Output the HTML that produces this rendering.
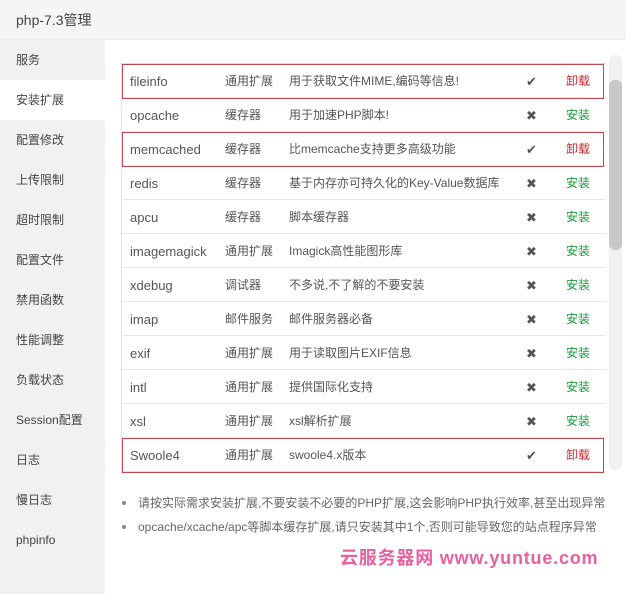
<!DOCTYPE html><html><head><meta charset="utf-8"><style>
*{margin:0;padding:0;box-sizing:border-box}
body{width:626px;height:594px;overflow:hidden;background:#fff;font-family:"Liberation Sans","Noto Sans CJK SC",sans-serif;font-size:12px;color:#555;position:relative}
.hd{position:absolute;left:0;top:0;width:626px;height:40px;background:#f5f5f5;border-bottom:1px solid #eee;font-size:14px;color:#444;line-height:40px;padding-left:16px}
.sb{position:absolute;left:0;top:40px;width:105px;height:554px;background:#f1f1f1}
.sb div{height:40px;line-height:40px;padding-left:16px;font-size:12px;color:#444}
.sb .on{background:#fff}
.tb{position:absolute;left:121px;top:63px;width:485px;border-top:1px solid #ddd;border-left:1px solid #e6e6e6}
.r{position:relative;height:34px;border-bottom:1px solid #e6e6e6;line-height:35px}
.r span{position:absolute;top:0}
.r .a{left:8px;font-size:13px}.r .b{left:103px}.r .c{left:167px}.r .d{left:404px;font-size:13px;color:#555}.r .e{left:444px}
.hl:after{content:"";position:absolute;left:0;top:0;width:480px;height:33px;border:1px solid #c0474d}
.red{color:#d0242b}.grn{color:#1a9a3a}
.sc{position:absolute;left:609px;top:55px;width:13px;height:415px;background:#f1f1f1;border-radius:6px}
.th{position:absolute;left:609px;top:80px;width:13px;height:170px;background:#c8c8c8;border-radius:6px}
ul{position:absolute;left:122px;top:492px;list-style:none;font-size:12px;color:#666}
li{height:24px;line-height:22px;padding-left:16px;position:relative}
li:before{content:"";position:absolute;left:0;top:9px;width:4px;height:4px;border-radius:2px;background:#888}
.wm{position:absolute;left:340px;top:544px;font-size:18px;font-weight:bold;color:#e8609e;letter-spacing:0.8px}
</style></head><body>
<div class="hd">php-7.3管理</div>
<div class="sb"><div>服务</div><div class="on">安装扩展</div><div>配置修改</div><div>上传限制</div><div>超时限制</div><div>配置文件</div><div>禁用函数</div><div>性能调整</div><div>负载状态</div><div>Session配置</div><div>日志</div><div>慢日志</div><div>phpinfo</div></div>
<div class="tb">
<div class="r hl"><span class="a">fileinfo</span><span class="b">通用扩展</span><span class="c">用于获取文件MIME,编码等信息!</span><span class="d">✔</span><span class="e red">卸载</span></div>
<div class="r"><span class="a">opcache</span><span class="b">缓存器</span><span class="c">用于加速PHP脚本!</span><span class="d">✖</span><span class="e grn">安装</span></div>
<div class="r hl"><span class="a">memcached</span><span class="b">缓存器</span><span class="c">比memcache支持更多高级功能</span><span class="d">✔</span><span class="e red">卸载</span></div>
<div class="r"><span class="a">redis</span><span class="b">缓存器</span><span class="c">基于内存亦可持久化的Key-Value数据库</span><span class="d">✖</span><span class="e grn">安装</span></div>
<div class="r"><span class="a">apcu</span><span class="b">缓存器</span><span class="c">脚本缓存器</span><span class="d">✖</span><span class="e grn">安装</span></div>
<div class="r"><span class="a">imagemagick</span><span class="b">通用扩展</span><span class="c">Imagick高性能图形库</span><span class="d">✖</span><span class="e grn">安装</span></div>
<div class="r"><span class="a">xdebug</span><span class="b">调试器</span><span class="c">不多说,不了解的不要安装</span><span class="d">✖</span><span class="e grn">安装</span></div>
<div class="r"><span class="a">imap</span><span class="b">邮件服务</span><span class="c">邮件服务器必备</span><span class="d">✖</span><span class="e grn">安装</span></div>
<div class="r"><span class="a">exif</span><span class="b">通用扩展</span><span class="c">用于读取图片EXIF信息</span><span class="d">✖</span><span class="e grn">安装</span></div>
<div class="r"><span class="a">intl</span><span class="b">通用扩展</span><span class="c">提供国际化支持</span><span class="d">✖</span><span class="e grn">安装</span></div>
<div class="r"><span class="a">xsl</span><span class="b">通用扩展</span><span class="c">xsl解析扩展</span><span class="d">✖</span><span class="e grn">安装</span></div>
<div class="r hl"><span class="a">Swoole4</span><span class="b">通用扩展</span><span class="c">swoole4.x版本</span><span class="d">✔</span><span class="e red">卸载</span></div>
</div>
<div class="sc"></div><div class="th"></div>
<ul><li>请按实际需求安装扩展,不要安装不必要的PHP扩展,这会影响PHP执行效率,甚至出现异常</li><li>opcache/xcache/apc等脚本缓存扩展,请只安装其中1个,否则可能导致您的站点程序异常</li></ul>
<div class="wm">云服务器网 www.yuntue.com</div>
</body></html>
